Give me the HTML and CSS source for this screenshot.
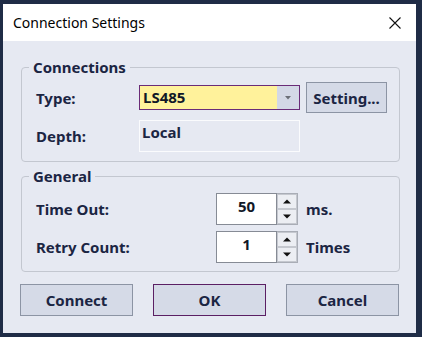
FILE: index.html
```html
<!DOCTYPE html>
<html>
<head>
<meta charset="utf-8">
<link rel="stylesheet" href="styles.css">
</head>
<body>
<div class="window">
  <div class="titlebar">
    <span class="title">Connection Settings</span>
    <svg class="close" width="12" height="12" viewBox="0 0 12 12"><path d="M0.5 0.5L11.5 11.5M11.5 0.5L0.5 11.5" stroke="#111" stroke-width="1.1" fill="none"/></svg>
  </div>
  <div class="content">
    <fieldset class="group conn">
      <legend>Connections</legend>
      <div class="conn-grid">
        <span class="label">Type:</span>
        <div class="combo">
          <span class="combo-text">LS485</span>
          <span class="combo-btn"><svg width="6" height="4" viewBox="0 0 6 4"><path d="M0 0H6L3 3.5Z" fill="#6b6f78"/></svg></span>
        </div>
        <button class="btn setting">Setting...</button>
        <span class="label">Depth:</span>
        <div class="readonly">Local</div>
      </div>
    </fieldset>
    <fieldset class="group gen">
      <legend>General</legend>
      <div class="gen-grid">
        <span class="label">Time Out:</span>
        <div class="spin">
          <span class="spin-val">50</span>
          <span class="spin-btns">
            <span class="spin-up"><svg width="8" height="5" viewBox="0 0 8 5"><path d="M0 4.5H8L4 0.5Z" fill="#111"/></svg></span>
            <span class="spin-down"><svg width="8" height="5" viewBox="0 0 8 5"><path d="M0 0.5H8L4 4.5Z" fill="#111"/></svg></span>
          </span>
        </div>
        <span class="unit">ms.</span>
        <span class="label">Retry Count:</span>
        <div class="spin">
          <span class="spin-val">1</span>
          <span class="spin-btns">
            <span class="spin-up"><svg width="8" height="5" viewBox="0 0 8 5"><path d="M0 4.5H8L4 0.5Z" fill="#111"/></svg></span>
            <span class="spin-down"><svg width="8" height="5" viewBox="0 0 8 5"><path d="M0 0.5H8L4 4.5Z" fill="#111"/></svg></span>
          </span>
        </div>
        <span class="unit">Times</span>
      </div>
    </fieldset>
    <div class="actions">
      <button class="btn action">Connect</button>
      <button class="btn action default">OK</button>
      <button class="btn action">Cancel</button>
    </div>
  </div>
</div>
</body>
</html>
```
FILE: styles.css
```css
* { box-sizing: border-box; }
html, body { margin: 0; padding: 0; }
body {
  background: #1f2c46;
  padding: 4px 6px 4px 3px;
  width: 422px;
  height: 337px;
  font-family: "Noto Sans", "Open Sans", sans-serif;
  color: #1b2543;
}
.window {
  width: 413px;
  height: 329px;
  background: #e6e9f2;
  display: flex;
  flex-direction: column;
}
.titlebar {
  height: 37px;
  background: #ffffff;
  display: flex;
  align-items: center;
  justify-content: space-between;
  padding: 0 15px 0 10px;
}
.title {
  font-size: 14px;
  color: #000;
  font-weight: 400;
}
.close { display: block; }
.content {
  padding: 16px 16px 0 18px;
  display: flex;
  flex-direction: column;
}
.group {
  margin: 0;
  padding: 0;
  border: 1px solid #c3c7d0;
  border-radius: 4px;
  min-width: 0;
}
.group legend {
  margin-left: 7px;
  padding: 0 4px;
  font-size: 15px;
  font-weight: 700;
  line-height: 20px;
}
.label, .unit {
  font-size: 15px;
  font-weight: 700;
  line-height: 20px;
}
.conn-grid {
  display: grid;
  grid-template-columns: 97px 161px 81px;
  grid-template-rows: 31px 32px;
  column-gap: 6px;
  row-gap: 7px;
  align-items: center;
  padding: 5px 0 9px 14px;
}
.combo {
  height: 25px;
  border: 1px solid #6a2c78;
  background: #fff29b;
  display: flex;
}
.combo-text {
  flex: 1;
  font-size: 15px;
  font-weight: 700;
  line-height: 22px;
  padding-left: 3px;
  color: #111827;
}
.combo-btn {
  width: 22px;
  background: #d3d8e6;
  display: flex;
  align-items: center;
  justify-content: center;
}
.combo-btn svg { display: block; }
.btn {
  font-family: "Noto Sans", "Open Sans", sans-serif;
  font-size: 15px;
  font-weight: 700;
  color: #1b2543;
  background: #d5dae7;
  border: 1px solid #8c94a4;
  padding: 0;
  margin: 0;
}
.setting {
  height: 31px;
  width: 81px;
}
.readonly {
  grid-column: 2;
  height: 32px;
  border: 1px solid #fafbfd;
  font-size: 15px;
  font-weight: 700;
  line-height: 20px;
  padding: 1px 0 0 2px;
}
.gen-grid {
  display: grid;
  grid-template-columns: 172px 82px auto;
  grid-template-rows: 32px 32px;
  column-gap: 8px;
  row-gap: 6px;
  align-items: center;
  padding: 7px 0 8px 14px;
}
.spin {
  display: flex;
  height: 32px;
}
.spin-val {
  width: 61px;
  background: #ffffff;
  border: 1px solid #868b95;
  text-align: center;
  font-size: 15px;
  font-weight: 700;
  line-height: 24px;
  color: #111827;
}
.spin-btns {
  width: 21px;
  display: flex;
  flex-direction: column;
  border: 1px solid #a9adb6;
  border-left: none;
}
.spin-up, .spin-down {
  flex: 1;
  display: flex;
  align-items: center;
  justify-content: center;
  background: #eceef3;
  border: 1px solid #c5c8cf;
}
.spin-up svg, .spin-down svg { display: block; }
.gen { margin-top: 4px; }
.actions {
  display: flex;
  justify-content: space-between;
  margin: 12px 1px 0 -1px;
}
.action {
  width: 113px;
  height: 32px;
}
.default { border-color: #5b1f64; }
```
